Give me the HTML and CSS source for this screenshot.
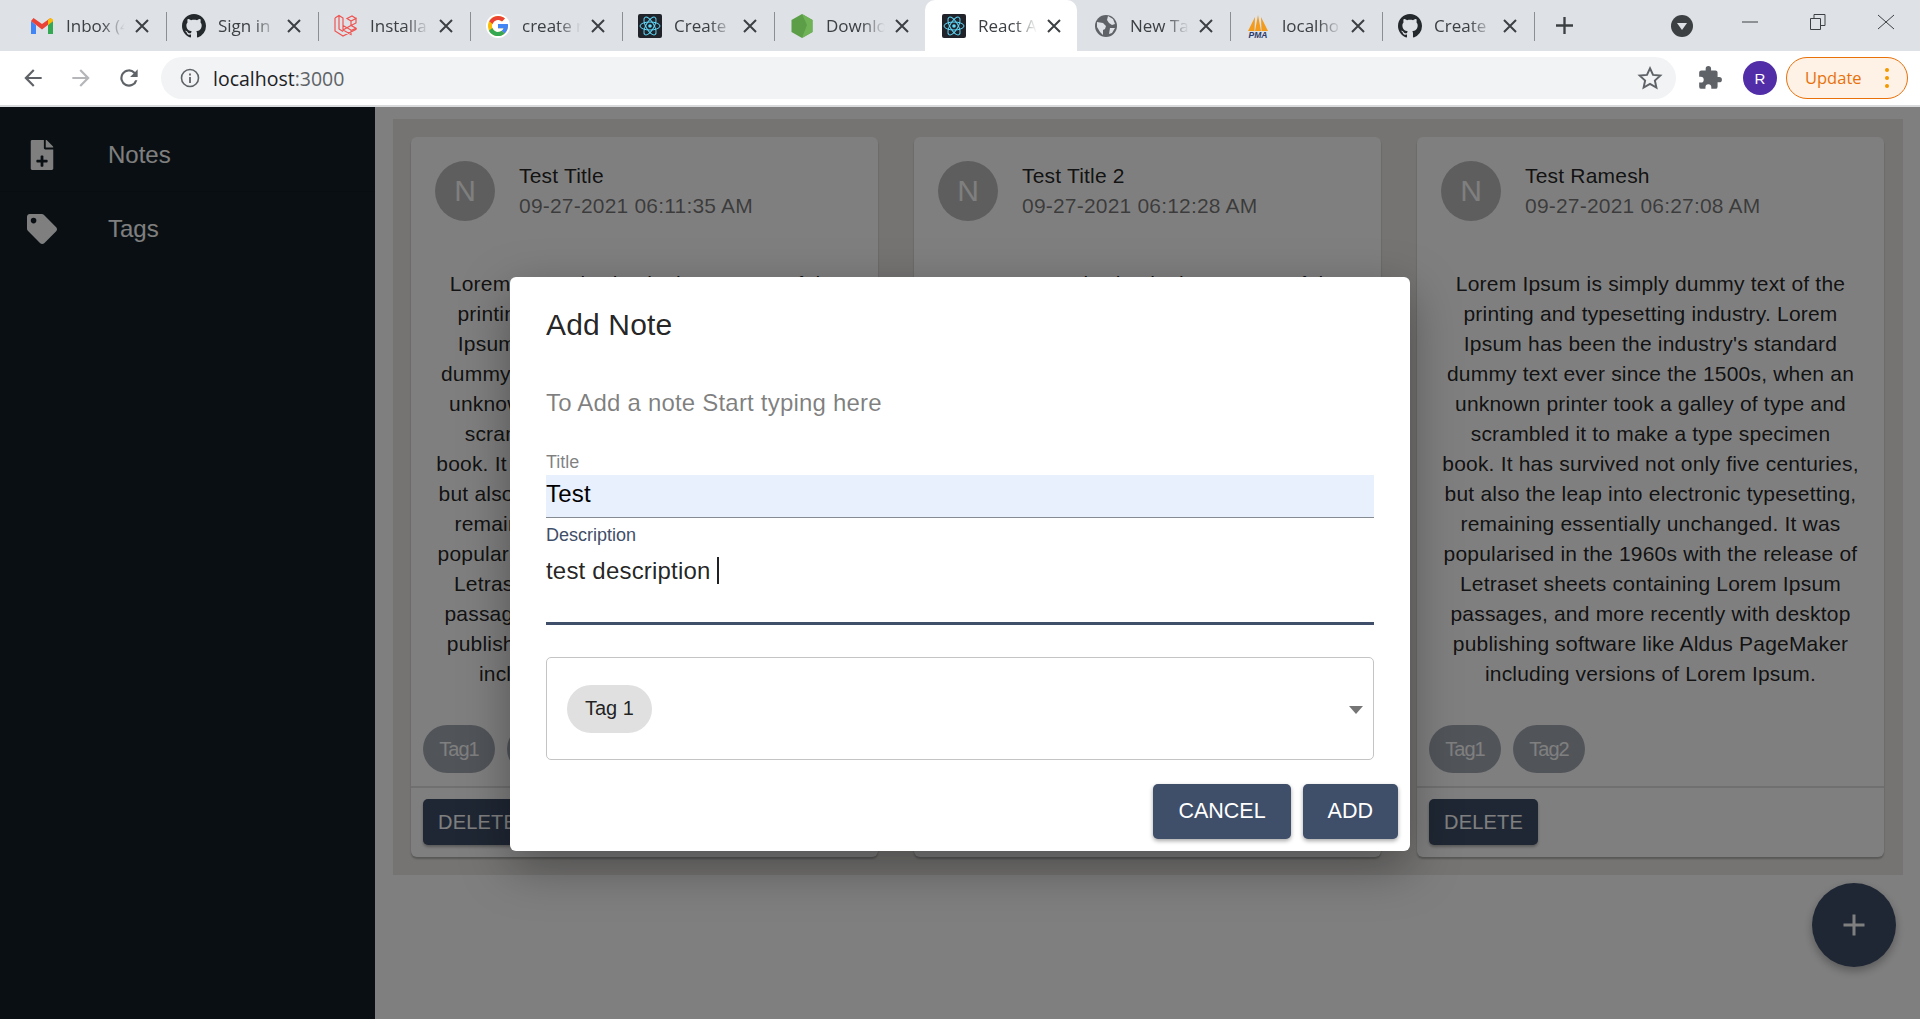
FILE: index.html
```html
<!doctype html>
<html lang="en">
    <head>
        <meta charset="UTF-8">
        <title>React App</title>
        <link rel="stylesheet" href="styles.css">
    </head>
    <body>
        <svg class="defs">
            <defs>
                <symbol id="github" viewBox="0 0 16 16"><path d="M8 0C3.58 0 0 3.58 0 8c0 3.54 2.29 6.53 5.47 7.59.4.07.55-.17.55-.38 0-.19-.01-.82-.01-1.49-2.01.37-2.53-.49-2.69-.94-.09-.23-.48-.94-.82-1.13-.28-.15-.68-.52-.01-.53.63-.01 1.08.58 1.23.82.72 1.21 1.87.87 2.33.66.07-.52.28-.87.51-1.07-1.78-.2-3.64-.89-3.64-3.95 0-.87.31-1.59.82-2.15-.08-.2-.36-1.02.08-2.12 0 0 .67-.21 2.2.82.64-.18 1.32-.27 2-.27s1.36.09 2 .27c1.53-1.04 2.2-.82 2.2-.82.44 1.1.16 1.92.08 2.12.51.56.82 1.27.82 2.15 0 3.07-1.87 3.75-3.65 3.95.29.25.54.73.54 1.48 0 1.07-.01 1.93-.01 2.2 0 .21.15.46.55.38A8.01 8.01 0 0 0 16 8c0-4.42-3.58-8-8-8z" fill="#24292e"/></symbol>
                <symbol id="react" viewBox="0 0 24 24"><rect width="24" height="24" rx="2" fill="#20232a"/><g fill="none" stroke="#61dafb" stroke-width="1"><ellipse cx="12" cy="12" rx="10" ry="4"/><ellipse cx="12" cy="12" rx="10" ry="4" transform="rotate(60 12 12)"/><ellipse cx="12" cy="12" rx="10" ry="4" transform="rotate(120 12 12)"/></g><circle cx="12" cy="12" r="1.8" fill="#61dafb"/></symbol>
                <symbol id="close" viewBox="0 0 14 14"><path d="M1 1l12 12M13 1L1 13" stroke="#3c4043" stroke-width="2" fill="none"/></symbol>
            </defs>
        </svg>

        <div class="tabstrip">
            <div class="tab">
                <svg class="favicon" viewBox="0 0 24 24"><path d="M1 7v13h5V11z" fill="#4285f4"/><path d="M18 11v9h5V7z" fill="#34a853"/><path d="M1 7l11 8.500L23 7l-2.500-3L12 10 3.500 4z" fill="#ea4335"/><path d="M18 11l5-4V5.500L20.500 4 18 6z" fill="#fbbc04"/></svg>
                <span class="tab-title">Inbox (4</span>
                <svg class="tab-close"><use href="#close"/></svg>
            </div>
            <div class="tab">
                <svg class="favicon"><use href="#github"/></svg>
                <span class="tab-title">Sign in</span>
                <svg class="tab-close"><use href="#close"/></svg>
            </div>
            <div class="tab">
                <svg class="favicon" viewBox="0 0 24 24"><path d="M1 4l4-2.500L9 4v12l8 4.500V16l-8-4.500M9 16l8-4.500 5 2.800-5 2.200M17 11.500V7l5-2.500V9zM13 4.500L17 7l5-2.500L18 2zM1 4v13l8 5 13-6.500V14M5 1.500V15l4 2.500" fill="none" stroke="#ef5350" stroke-width="1.200"/></svg>
                <span class="tab-title">Installa</span>
                <svg class="tab-close"><use href="#close"/></svg>
            </div>
            <div class="tab">
                <svg class="favicon" viewBox="0 0 48 48"><circle cx="24" cy="24" r="24" fill="#fff"/><path d="M43.600 20H24v8.500h11.300C33.700 33.300 29.300 36 24 36c-6.600 0-12-5.400-12-12s5.400-12 12-12c3 0 5.800 1.100 7.900 3l6-6C34.500 5.900 29.500 4 24 4 13 4 4 13 4 24s9 20 20 20 20-9 20-20c0-1.300-.1-2.700-.4-4z" fill="#fbbc05"/><path d="M6.300 14.700l7 5.100C15.200 15.200 19.300 12 24 12c3 0 5.800 1.100 7.900 3l6-6C34.500 5.900 29.500 4 24 4 16.300 4 9.700 8.300 6.300 14.700z" fill="#ea4335"/><path d="M24 44c5.200 0 9.900-2 13.400-5.200l-6.200-5.200C29.200 35.100 26.700 36 24 36c-5.200 0-9.600-3.300-11.300-7.900l-6.900 5.300C9.200 39.600 16.100 44 24 44z" fill="#34a853"/><path d="M43.600 20H24v8.500h11.300c-.8 2.200-2.200 4-4.100 5.200l6.200 5.200C41 35.500 44 30.200 44 24c0-1.300-.1-2.700-.4-4z" fill="#4285f4"/></svg>
                <span class="tab-title">create r</span>
                <svg class="tab-close"><use href="#close"/></svg>
            </div>
            <div class="tab">
                <svg class="favicon"><use href="#react"/></svg>
                <span class="tab-title">Create</span>
                <svg class="tab-close"><use href="#close"/></svg>
            </div>
            <div class="tab">
                <svg class="favicon" viewBox="0 0 24 24"><path d="M12 0l10.500 6v12L12 24 1.500 18V6z" fill="#5c9e48"/><path d="M12 0l10.500 6v12L12 24l5-13z" fill="#6fb356"/></svg>
                <span class="tab-title">Downlo</span>
                <svg class="tab-close"><use href="#close"/></svg>
            </div>
            <div class="tab tab-active">
                <svg class="favicon"><use href="#react"/></svg>
                <span class="tab-title">React A</span>
                <svg class="tab-close"><use href="#close"/></svg>
            </div>
            <div class="tab">
                <svg class="favicon" viewBox="0 0 24 24"><circle cx="12" cy="12" r="11" fill="#5f6368"/><path d="M3 8l6 1 3 3-1 3-2 1v5l-3-3-3-5zM14 2l5 3 2 5-3 1-3-2-2-3zM16 14h5l-3 5-3 1z" fill="#dee1e6"/></svg>
                <span class="tab-title">New Ta</span>
                <svg class="tab-close"><use href="#close"/></svg>
            </div>
            <div class="tab">
                <svg class="favicon" viewBox="0 0 24 24"><path d="M2 17L9 3l-.5 14zM9 17l3-16 3 16zM15.500 17L15 3l7 14z" fill="#f29b1d"/><text class="pma" x="12" y="24" text-anchor="middle">PMA</text></svg>
                <span class="tab-title">localho</span>
                <svg class="tab-close"><use href="#close"/></svg>
            </div>
            <div class="tab">
                <svg class="favicon"><use href="#github"/></svg>
                <span class="tab-title">Create</span>
                <svg class="tab-close"><use href="#close"/></svg>
            </div>
            <svg class="new-tab" viewBox="0 0 16 16"><path d="M8 0v16M0 8h16" stroke="#3c4043" stroke-width="2.200"/></svg>
            <div class="window-controls">
                <svg class="tab-search" viewBox="0 0 22 22"><circle cx="11" cy="11" r="11" fill="#3c4043"/><path d="M6 8h10l-5 7z" fill="#dee1e6"/></svg>
                <svg class="win-btn" viewBox="0 0 16 16"><path d="M0 8h16" stroke="#3c4043"/></svg>
                <svg class="win-btn" viewBox="0 0 16 16"><path d="M.5 4.500h10v11H.5zM4 4.500v-4h11v11h-4.500" fill="none" stroke="#3c4043"/></svg>
                <svg class="win-btn" viewBox="0 0 16 16"><path d="M0 1l16 14M16 1L0 15" stroke="#3c4043"/></svg>
            </div>
        </div>

        <div class="toolbar">
            <svg class="nav-icon" viewBox="0 0 24 24"><path d="M20 11H7.800l5.600-5.600L12 4l-8 8 8 8 1.400-1.400L7.800 13H20z" fill="#5f6368"/></svg>
            <svg class="nav-icon" viewBox="0 0 24 24"><path d="M4 11h12.200l-5.600-5.600L12 4l8 8-8 8-1.400-1.400 5.600-5.600H4z" fill="#b4b6b9"/></svg>
            <svg class="nav-icon" viewBox="0 0 24 24"><path d="M17.650 6.350A8 8 0 1 0 19.750 14h-2.100a6 6 0 1 1-1.400-6.250L13 11h7V4z" fill="#5f6368"/></svg>
            <div class="omnibox">
                <svg class="info-icon" viewBox="0 0 20 20"><circle cx="10" cy="10" r="8.500" fill="none" stroke="#5f6368" stroke-width="1.600"/><path d="M10 9v6M10 5.500v2" stroke="#5f6368" stroke-width="1.800"/></svg>
                <span class="url">localhost<span class="url-port">:3000</span></span>
                <svg class="star-icon" viewBox="0 0 24 24"><path d="M12 3l2.800 6.100 6.700.7-5 4.500 1.400 6.600L12 17.500l-5.900 3.400 1.400-6.600-5-4.500 6.700-.7z" fill="none" stroke="#5f6368" stroke-width="1.800"/></svg>
            </div>
            <svg class="ext-icon" viewBox="0 0 24 24"><path d="M20.500 11H19V7a2 2 0 0 0-2-2h-4V3.500a2.500 2.500 0 0 0-5 0V5H4a2 2 0 0 0-2 2v3.800h1.500a2.700 2.700 0 0 1 0 5.400H2V20a2 2 0 0 0 2 2h3.800v-1.500a2.700 2.700 0 0 1 5.400 0V22H17a2 2 0 0 0 2-2v-4h1.500a2.500 2.500 0 0 0 0-5z" fill="#5f6368"/></svg>
            <div class="profile">R</div>
            <div class="update">
                <span>Update</span>
                <span class="update-dots"><i></i><i></i><i></i></span>
            </div>
        </div>

        <div class="app">
            <nav class="sidebar">
                <div class="nav-item nav-item-first">
                    <svg class="nav-glyph" viewBox="0 0 384 512"><path d="M224 136V0H24C10.700 0 0 10.700 0 24v464c0 13.300 10.700 24 24 24h336c13.300 0 24-10.700 24-24V160H248c-13.200 0-24-10.800-24-24zm64 236c0 6.600-5.400 12-12 12h-60v60c0 6.600-5.400 12-12 12h-24c-6.600 0-12-5.400-12-12v-60h-60c-6.600 0-12-5.400-12-12v-24c0-6.600 5.400-12 12-12h60v-60c0-6.600 5.400-12 12-12h24c6.600 0 12 5.400 12 12v60h60c6.600 0 12 5.400 12 12zm96-250v6H256V0h6.100c6.400 0 12.500 2.500 17 7l97.900 98c4.500 4.500 7 10.600 7 16.900z"/></svg>
                    <span>Notes</span>
                </div>
                <div class="nav-item">
                    <svg class="nav-glyph" viewBox="0 0 512 512"><path d="M0 252.100V48C0 21.500 21.500 0 48 0h204.100a48 48 0 0 1 33.900 14.100l211.900 211.900c18.700 18.700 18.700 49.100 0 67.900L293.800 497.900c-18.700 18.700-49.100 18.700-67.900 0L14.100 286.100A48 48 0 0 1 0 252.100zM112 64a48 48 0 1 0 0 96 48 48 0 0 0 0-96z"/></svg>
                    <span>Tags</span>
                </div>
            </nav>
            <main class="content">
                <div class="notes-grid">
                    <article class="note-card">
                        <header class="note-head">
                            <div class="avatar">N</div>
                            <div>
                                <div class="note-title">Test Title</div>
                                <div class="note-date">09-27-2021 06:11:35 AM</div>
                            </div>
                        </header>
                        <p class="note-body">Lorem Ipsum is simply dummy text of the printing and typesetting industry. Lorem Ipsum has been the industry's standard dummy text ever since the 1500s, when an unknown printer took a galley of type and scrambled it to make a type specimen<br>book. It has survived not only five centuries, but also the leap into electronic typesetting, remaining essentially unchanged. It was popularised in the 1960s with the release of Letraset sheets containing Lorem Ipsum passages, and more recently with desktop publishing software like Aldus PageMaker including versions of Lorem Ipsum.</p>
                        <div class="note-tags"><span class="tag">Tag1</span><span class="tag">Tag2</span></div>
                        <div class="note-actions"><button class="delete-btn">DELETE</button></div>
                    </article>
                    <article class="note-card">
                        <header class="note-head">
                            <div class="avatar">N</div>
                            <div>
                                <div class="note-title">Test Title 2</div>
                                <div class="note-date">09-27-2021 06:12:28 AM</div>
                            </div>
                        </header>
                        <p class="note-body">Lorem Ipsum is simply dummy text of the printing and typesetting industry. Lorem Ipsum has been the industry's standard dummy text ever since the 1500s, when an unknown printer took a galley of type and scrambled it to make a type specimen<br>book. It has survived not only five centuries, but also the leap into electronic typesetting, remaining essentially unchanged. It was popularised in the 1960s with the release of Letraset sheets containing Lorem Ipsum passages, and more recently with desktop publishing software like Aldus PageMaker including versions of Lorem Ipsum.</p>
                        <div class="note-tags"><span class="tag">Tag1</span><span class="tag">Tag2</span></div>
                        <div class="note-actions"><button class="delete-btn">DELETE</button></div>
                    </article>
                    <article class="note-card">
                        <header class="note-head">
                            <div class="avatar">N</div>
                            <div>
                                <div class="note-title">Test Ramesh</div>
                                <div class="note-date">09-27-2021 06:27:08 AM</div>
                            </div>
                        </header>
                        <p class="note-body">Lorem Ipsum is simply dummy text of the printing and typesetting industry. Lorem Ipsum has been the industry's standard dummy text ever since the 1500s, when an unknown printer took a galley of type and scrambled it to make a type specimen<br>book. It has survived not only five centuries, but also the leap into electronic typesetting, remaining essentially unchanged. It was popularised in the 1960s with the release of Letraset sheets containing Lorem Ipsum passages, and more recently with desktop publishing software like Aldus PageMaker including versions of Lorem Ipsum.</p>
                        <div class="note-tags"><span class="tag">Tag1</span><span class="tag">Tag2</span></div>
                        <div class="note-actions"><button class="delete-btn">DELETE</button></div>
                    </article>
                </div>
                <div class="fab"><svg viewBox="0 0 24 24"><path d="M19 13h-6v6h-2v-6H5v-2h6V5h2v6h6z"/></svg></div>
            </main>
            <div class="backdrop"></div>
            <div class="modal">
                <h2 class="modal-title">Add Note</h2>
                <p class="modal-hint">To Add a note Start typing here</p>
                <div class="field field-title">
                    <label>Title</label>
                    <div class="input input-filled">Test</div>
                </div>
                <div class="field field-desc">
                    <label>Description</label>
                    <div class="input input-focus">test description <span class="caret"></span></div>
                </div>
                <div class="select">
                    <span class="chip">Tag 1</span>
                    <span class="select-arrow"></span>
                </div>
                <div class="modal-actions">
                    <button class="modal-btn">CANCEL</button>
                    <button class="modal-btn">ADD</button>
                </div>
            </div>
        </div>
    </body>
</html>
```

FILE: styles.css
```css
* {
    box-sizing: border-box;
}
html, body {
    height: 100%;
}
body {
    margin: 0;
    display: flex;
    flex-direction: column;
    font-family: "Liberation Sans", Arial, sans-serif;
    color: #000;
    overflow: hidden;
    background: #fff;
}
.defs {
    display: none;
}

/* browser chrome */
.tabstrip {
    height: 51px;
    flex: none;
    display: flex;
    align-items: center;
    padding-left: 13px;
    background: #dee1e6;
}
.tab {
    width: 152px;
    height: 51px;
    flex: none;
    display: flex;
    align-items: center;
    padding: 0 16px 0 17px;
    position: relative;
    font-family: "Open Sans", sans-serif;
    font-size: 17px;
    color: #3c4043;
}
.tab::after {
    content: "";
    position: absolute;
    right: -2px;
    top: 12px;
    height: 29px;
    border-right: 1px solid #8b8e92;
}
.tab:nth-child(6)::after,
.tab:nth-child(7)::after {
    display: none;
}
.tab-active {
    background: #fff;
    border-radius: 10px 10px 0 0;
}
.favicon {
    width: 24px;
    height: 24px;
    flex: none;
    margin-right: 12px;
}
.pma {
    font-family: "Liberation Sans", sans-serif;
    font-size: 8.5px;
    font-weight: 700;
    font-style: italic;
    fill: #2a3a6b;
}
.tab-title {
    flex: 1;
    min-width: 0;
    margin-right: 10px;
    overflow: hidden;
    white-space: nowrap;
    -webkit-mask-image: linear-gradient(to right, #000 60%, transparent 100%);
    mask-image: linear-gradient(to right, #000 60%, transparent 100%);
}
.tab-close {
    width: 14px;
    height: 14px;
    flex: none;
}
.new-tab {
    width: 17px;
    height: 17px;
    margin-left: 23px;
    flex: none;
}
.window-controls {
    margin-left: auto;
    display: flex;
    align-items: center;
}
.tab-search {
    width: 22px;
    height: 22px;
    margin-right: 49px;
}
.win-btn {
    width: 16px;
    height: 16px;
    margin: 0 52px 8px 0;
}
.win-btn:last-child {
    margin-right: 26px;
}
.toolbar {
    height: 56px;
    flex: none;
    display: flex;
    align-items: center;
    padding: 0 12px 0 20px;
    background: #fff;
    border-bottom: 2px solid #d9dadc;
}
.nav-icon {
    width: 26px;
    height: 26px;
    margin-right: 22px;
    flex: none;
}
.omnibox {
    flex: 1;
    height: 42px;
    margin-left: -3px;
    display: flex;
    align-items: center;
    padding: 0 13px 0 19px;
    background: #f1f3f4;
    border-radius: 21px;
}
.info-icon {
    width: 20px;
    height: 20px;
    margin-right: 13px;
}
.url {
    font-family: "Open Sans", sans-serif;
    font-size: 19.5px;
    color: #202124;
}
.url-port {
    color: #5f6368;
}
.star-icon {
    width: 26px;
    height: 26px;
    margin-left: auto;
}
.ext-icon {
    width: 26px;
    height: 26px;
    margin-left: 21px;
    flex: none;
}
.profile {
    width: 34px;
    height: 34px;
    margin-left: 20px;
    flex: none;
    display: flex;
    align-items: center;
    justify-content: center;
    border-radius: 50%;
    background: #512da8;
    color: #fff;
    font-size: 15px;
}
.update {
    width: 122px;
    height: 42px;
    margin-left: 9px;
    flex: none;
    display: flex;
    align-items: center;
    justify-content: space-between;
    padding: 0 18px 1px 18px;
    border: 1.5px solid #e8710a;
    border-radius: 21px;
    background: #fef1e6;
    color: #e8710a;
    font-family: "Open Sans", sans-serif;
    font-size: 16.5px;
}
.update-dots {
    display: flex;
    flex-direction: column;
    gap: 4px;
}
.update-dots i {
    width: 4px;
    height: 4px;
    border-radius: 50%;
    background: #f29900;
}

/* app */
.app {
    flex: 1;
    min-height: 0;
    display: flex;
    position: relative;
}
.sidebar {
    width: 375px;
    flex: none;
    padding-top: 11px;
    background: #141f27;
    color: #fff;
}
.nav-item {
    height: 74px;
    display: flex;
    align-items: center;
    padding-left: 27px;
    font-size: 24px;
}
.nav-item-first {
    border-bottom: 1px solid rgba(0, 0, 0, 0.12);
}
.nav-glyph {
    width: 30px;
    height: 30px;
    margin-right: 51px;
    fill: #fff;
}
.content {
    flex: 1;
    position: relative;
    background: #fff;
}
.notes-grid {
    width: 1510px;
    height: 756px;
    margin: 12px 0 0 18px;
    display: flex;
    gap: 36px;
    padding: 18px;
    background: #ebe9e7;
}
.note-card {
    width: 467px;
    height: 720px;
    flex: none;
    display: flex;
    flex-direction: column;
    background: #fff;
    border-radius: 6px;
    box-shadow: 0 2px 2px rgba(0, 0, 0, 0.25);
}
.note-head {
    height: 108px;
    flex: none;
    display: flex;
    align-items: center;
    padding: 0 24px;
}
.avatar {
    width: 60px;
    height: 60px;
    flex: none;
    margin-right: 24px;
    display: flex;
    align-items: center;
    justify-content: center;
    border-radius: 50%;
    background: #bdbdbd;
    color: #fff;
    font-size: 30px;
}
.note-title {
    font-size: 21px;
    line-height: 30px;
    letter-spacing: 0.197px;
    color: rgba(0, 0, 0, 0.87);
}
.note-date {
    font-size: 21px;
    line-height: 30px;
    letter-spacing: 0.197px;
    color: rgba(0, 0, 0, 0.54);
}
.note-body {
    flex: 1;
    margin: 0;
    padding: 24px 23px 0;
    font-size: 21px;
    line-height: 30px;
    letter-spacing: 0.197px;
    text-align: center;
    color: rgba(0, 0, 0, 0.87);
}
.note-tags {
    display: flex;
    gap: 12px;
    padding: 0 12px 13px;
    height: 61px;
    flex: none;
}
.tag {
    width: 72px;
    height: 48px;
    display: flex;
    align-items: center;
    justify-content: center;
    border-radius: 24px;
    background: #a3a9b2;
    color: #fff;
    font-size: 20px;
    letter-spacing: -1px;
}
.note-actions {
    height: 71px;
    flex: none;
    padding: 11px 12px;
    border-top: 2px solid #e0e0e0;
}
.delete-btn {
    height: 46px;
    width: 109px;
    border: 0;
    border-radius: 5px;
    background: #3f4e69;
    color: #fff;
    font: 20px "Liberation Sans", Arial, sans-serif;
    letter-spacing: 0.2px;
    box-shadow: 0 2px 3px rgba(0, 0, 0, 0.3);
}
.fab {
    width: 84px;
    height: 84px;
    position: absolute;
    right: 24px;
    bottom: 52px;
    display: flex;
    align-items: center;
    justify-content: center;
    border-radius: 50%;
    background: #3f4e69;
    box-shadow: 0 4px 10px rgba(0, 0, 0, 0.3);
}
.fab svg {
    width: 36px;
    height: 36px;
    fill: #fff;
}

/* dialog */
.backdrop {
    position: absolute;
    inset: 0;
    background: rgba(0, 0, 0, 0.5);
}
.modal {
    position: absolute;
    left: 510px;
    top: 170px;
    width: 900px;
    height: 574px;
    display: flex;
    flex-direction: column;
    padding: 0 36px;
    background: #fff;
    border-radius: 6px;
    box-shadow: 0 16px 50px rgba(0, 0, 0, 0.35);
}
.modal-title {
    margin: 28px 0 0;
    font-size: 30px;
    line-height: 40px;
    font-weight: 400;
    letter-spacing: 0.15px;
    color: rgba(0, 0, 0, 0.87);
}
.modal-hint {
    margin: 40px 0 0;
    font-size: 24px;
    line-height: 36px;
    letter-spacing: 0.2px;
    color: rgba(0, 0, 0, 0.5);
}
.field {
    display: flex;
    flex-direction: column;
}
.field label {
    font-size: 18px;
    line-height: 20px;
    color: rgba(0, 0, 0, 0.5);
}
.field-title {
    margin-top: 31px;
}
.field-title label {
    margin-bottom: 3px;
}
.field-desc {
    margin-top: 7px;
}
.field-desc label {
    color: #3f4e69;
}
.input {
    font-size: 24px;
    letter-spacing: 0.2px;
    color: rgba(0, 0, 0, 0.87);
}
.input-filled {
    height: 43px;
    line-height: 38px;
    background: #e8f0fe;
    color: #000;
    border-bottom: 1px solid #858a93;
}
.input-focus {
    height: 80px;
    padding-top: 8px;
    line-height: 36px;
    border-bottom: 3px solid #3f4e69;
}
.caret {
    display: inline-block;
    width: 2px;
    height: 27px;
    vertical-align: -5px;
    background: #202124;
}
.select {
    height: 103px;
    margin-top: 32px;
    flex: none;
    display: flex;
    align-items: center;
    padding-left: 20px;
    position: relative;
    border: 1px solid #c4c4c4;
    border-radius: 5px;
}
.chip {
    height: 48px;
    padding: 0 18px;
    display: flex;
    align-items: center;
    border-radius: 24px;
    background: #e0e0e0;
    font-size: 20px;
    color: rgba(0, 0, 0, 0.87);
}
.select-arrow {
    position: absolute;
    right: 10px;
    top: 48px;
    border-left: 7px solid transparent;
    border-right: 7px solid transparent;
    border-top: 8px solid #757575;
}
.modal-actions {
    display: flex;
    justify-content: flex-end;
    gap: 12px;
    margin: 24px -24px 0 0;
}
.modal-btn {
    height: 55px;
    padding: 0 25px;
    border: 0;
    border-radius: 5px;
    background: #3f4e69;
    color: #fff;
    font: 21.5px "Liberation Sans", Arial, sans-serif;
    box-shadow: 0 2px 4px rgba(0, 0, 0, 0.35);
}
```
